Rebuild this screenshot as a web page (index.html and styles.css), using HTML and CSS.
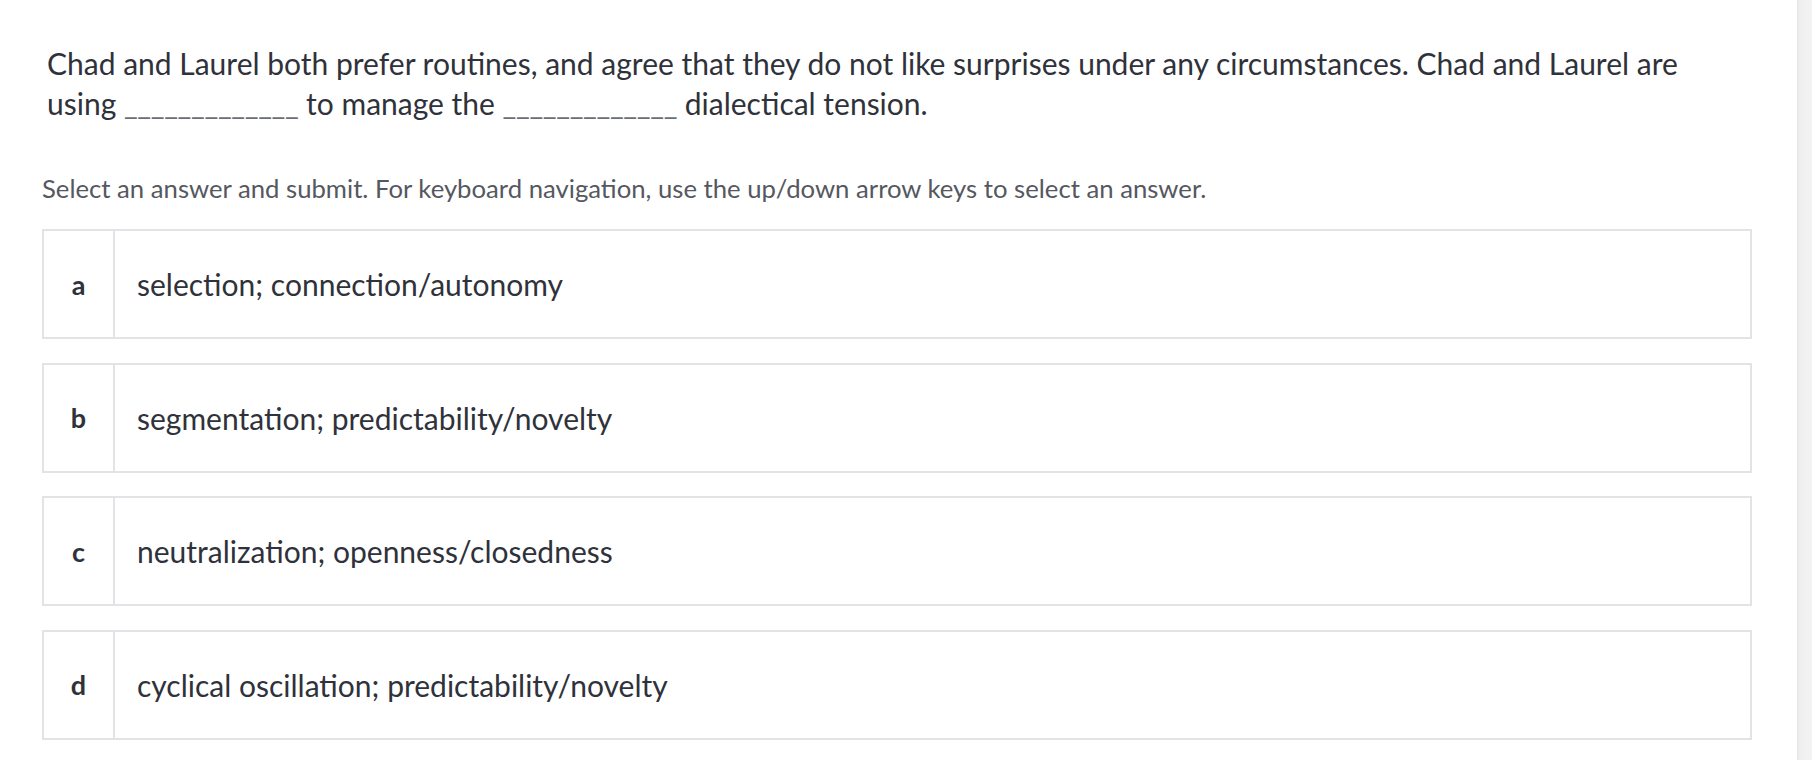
FILE: index.html
```html
<!DOCTYPE html>
<html lang="en">
<head>
<meta charset="utf-8">
<title>Question</title>
<link rel="stylesheet" href="styles.css">
</head>
<body>
<div class="page">
  <main class="content">
    <p class="question">Chad and Laurel both prefer routines, and agree that they do not like surprises under any circumstances. Chad and Laurel are using <span class="blank">_____________</span> to manage the <span class="blank">_____________</span> dialectical tension.</p>
    <p class="instructions">Select an answer and submit. For keyboard navigation, use the up/down arrow keys to select an answer.</p>
    <ul class="options">
      <li class="option"><span class="letter">a</span><span class="text">selection; connection/autonomy</span></li>
      <li class="option"><span class="letter">b</span><span class="text">segmentation; predictability/novelty</span></li>
      <li class="option"><span class="letter">c</span><span class="text">neutralization; openness/closedness</span></li>
      <li class="option"><span class="letter">d</span><span class="text">cyclical oscillation; predictability/novelty</span></li>
    </ul>
  </main>
  <div class="scrollbar"></div>
</div>
</body>
</html>
```
FILE: styles.css
```css
html, body {
  margin: 0;
  padding: 0;
  background: #ffffff;
}
body {
  font-family: Lato, "Noto Sans", sans-serif;
  color: #2f323a;
}
.page {
  display: flex;
  width: 1812px;
  height: 760px;
  overflow: hidden;
}
.content {
  flex: 1;
  padding: 44px 45px 0 42px;
}
.question {
  margin: 0;
  padding-left: 5px;
  font-size: 30px;
  line-height: 39.5px;
  color: #2f323a;
}
.blank {
  color: #6b6e76;
  letter-spacing: -0.35px;
}
.instructions {
  margin: 49px 0 0 0;
  font-size: 25.7px;
  line-height: 32px;
  color: #555860;
}
.options {
  list-style: none;
  margin: 25px 0 0 0;
  padding: 0;
  display: flex;
  flex-direction: column;
  gap: 23.5px;
}
.option {
  display: flex;
  align-items: stretch;
  height: 110px;
  box-sizing: border-box;
  border: 2px solid #e2e3e7;
  background: #ffffff;
}
.letter {
  width: 69px;
  flex: none;
  display: flex;
  align-items: center;
  justify-content: center;
  border-right: 2px solid #e2e3e7;
  font-weight: bold;
  font-size: 27px;
  color: #2f323a;
}
.text {
  display: flex;
  align-items: center;
  padding-left: 22px;
  font-size: 30px;
  color: #2f323a;
}
.scrollbar {
  width: 15px;
  flex: none;
  background: linear-gradient(to right, #e6e6e6 0, #efefef 3px, #f3f3f3 100%);
}
```
